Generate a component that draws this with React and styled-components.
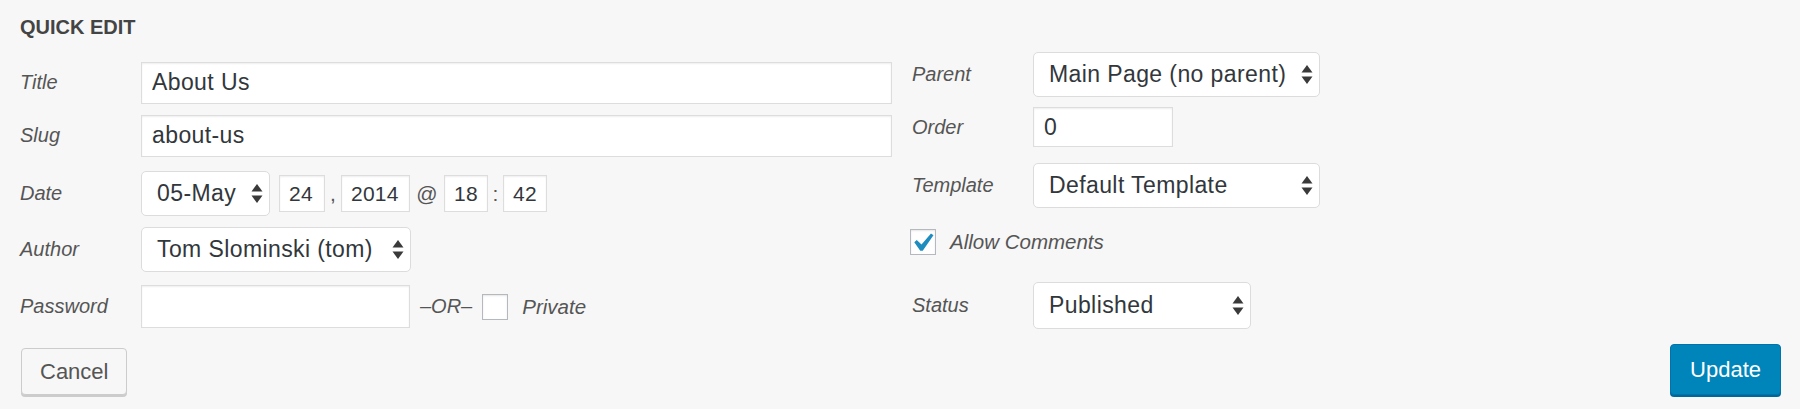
import React from 'react'
import styled, { createGlobalStyle } from 'styled-components'

const GlobalStyle = createGlobalStyle`
  html, body {
    margin: 0;
    padding: 0;
    background: #f7f7f7;
  }
  body {
    font-family: "Liberation Sans", Arial, sans-serif;
    color: #32373c;
  }
`

const Arrows = () => (
  <svg width="12" height="19" viewBox="0 0 12 19">
    <path d="M6 0 L11.5 7.5 L0.5 7.5 Z" fill="#3a3a3a" />
    <path d="M6 19 L11.5 11.5 L0.5 11.5 Z" fill="#3a3a3a" />
  </svg>
)

const Check = () => (
  <svg width="24" height="24" viewBox="4 3 13 13">
    <path d="M14.83 4.89l1.34.94-5.81 8.38H9.02L5.78 9.67l1.34-1.25 2.57 2.4z" fill="#1e8cbe" />
  </svg>
)

const QuickEdit = () => {
  return (
    <Panel>
      <GlobalStyle />
      <Heading>Quick Edit</Heading>
      <Columns>
        <LeftCol>
          <Row>
            <Label>Title</Label>
            <TextInput $w={751} $h={42} defaultValue="About Us" readOnly />
          </Row>
          <Row $mt={8}>
            <Label>Slug</Label>
            <TextInput $w={751} $h={42} defaultValue="about-us" readOnly />
          </Row>
          <Row $mt={13}>
            <Label>Date</Label>
            <Select $w={129}>
              <span>05-May</span>
              <Arrows />
            </Select>
            <Gap $w={9} />
            <SmallInput $w={46} defaultValue="24" readOnly />
            <Sep $w={16}>,</Sep>
            <SmallInput $w={69} defaultValue="2014" readOnly />
            <Sep $w={34}>@</Sep>
            <SmallInput $w={44} defaultValue="18" readOnly />
            <Sep $w={15}>:</Sep>
            <SmallInput $w={44} defaultValue="42" readOnly />
          </Row>
          <Row $mt={11}>
            <Label>Author</Label>
            <Select $w={270}>
              <span>Tom Slominski (tom)</span>
              <Arrows />
            </Select>
          </Row>
          <Row $mt={12}>
            <Label>Password</Label>
            <TextInput $w={269} $h={43} defaultValue="" readOnly />
            <Or>–OR–</Or>
            <CheckBox />
            <CheckText>Private</CheckText>
          </Row>
        </LeftCol>
        <RightCol>
          <Row $h={46}>
            <Label>Parent</Label>
            <Select $w={287}>
              <span>Main Page (no parent)</span>
              <Arrows />
            </Select>
          </Row>
          <Row $h={40} $mt={10}>
            <Label>Order</Label>
            <TextInput $w={140} $h={40} defaultValue="0" readOnly />
          </Row>
          <Row $h={46} $mt={15}>
            <Label>Template</Label>
            <Select $w={287}>
              <span>Default Template</span>
              <Arrows />
            </Select>
          </Row>
          <Row $h={26} $mt={21}>
            <CheckBox $left={-2}>
              <Check />
            </CheckBox>
            <CheckText>Allow Comments</CheckText>
          </Row>
          <Row $h={47} $mt={27}>
            <Label>Status</Label>
            <Select $w={218} $h={47}>
              <span>Published</span>
              <Arrows />
            </Select>
          </Row>
        </RightCol>
      </Columns>
      <Footer>
        <Button>Cancel</Button>
        <Button $primary>Update</Button>
      </Footer>
    </Panel>
  )
}

const Panel = styled.div`
  width: 1800px;
  height: 409px;
  box-sizing: border-box;
  padding: 15px 19px 0 20px;
  background: #f7f7f7;
  display: flex;
  flex-direction: column;
`

const Heading = styled.h2`
  margin: 0;
  font-size: 20px;
  line-height: 24px;
  font-weight: bold;
  color: #444;
  text-transform: uppercase;
`

const Columns = styled.div`
  display: flex;
  align-items: flex-start;
  margin-top: 12px;
`

const LeftCol = styled.div`
  width: 872px;
  padding-top: 9px;
  display: flex;
  flex-direction: column;
`

const RightCol = styled.div`
  margin-left: 20px;
  display: flex;
  flex-direction: column;
`

const Row = styled.div`
  display: flex;
  align-items: center;
  height: ${p => p.$h || 45}px;
  margin-top: ${p => p.$mt || 0}px;
`

const Label = styled.span`
  width: 121px;
  flex: none;
  font-style: italic;
  font-size: 20px;
  color: #555;
`

const TextInput = styled.input`
  box-sizing: border-box;
  width: ${p => p.$w}px;
  height: ${p => p.$h || 41}px;
  margin: 0;
  padding: 0 10px;
  border: 1px solid #ddd;
  border-radius: 0;
  background: #fff;
  box-shadow: inset 0 1px 2px rgba(0, 0, 0, 0.07);
  font-family: "Liberation Sans", Arial, sans-serif;
  font-size: 23px;
  letter-spacing: 0.4px;
  color: #32373c;
  outline: none;
`

const SmallInput = styled(TextInput)`
  height: 37px;
  padding: 0 9px;
  font-size: 21px;
  letter-spacing: 0.2px;
`

const Select = styled.div`
  box-sizing: border-box;
  width: ${p => p.$w}px;
  height: ${p => p.$h || 45}px;
  display: flex;
  align-items: center;
  justify-content: space-between;
  padding: 0 6px 0 15px;
  border: 1px solid #dcdcdc;
  border-radius: 5px;
  background: #fff;
  font-size: 23px;
  letter-spacing: 0.4px;
  color: #32373c;
  white-space: nowrap;
`

const Gap = styled.span`
  width: ${p => p.$w}px;
  flex: none;
`

const Sep = styled.span`
  width: ${p => p.$w}px;
  flex: none;
  text-align: center;
  font-size: 21px;
  color: #555;
`

const Or = styled.span`
  margin-left: 10px;
  font-style: italic;
  font-size: 20px;
  color: #555;
`

const CheckBox = styled.span`
  box-sizing: border-box;
  width: 26px;
  height: 26px;
  flex: none;
  margin-left: ${p => (p.$left !== undefined ? p.$left : 10)}px;
  display: flex;
  align-items: center;
  justify-content: center;
  border: 1px solid #b4b9be;
  background: #fff;
  box-shadow: inset 0 1px 2px rgba(0, 0, 0, 0.1);
`

const CheckText = styled.span`
  margin-left: 14px;
  font-style: italic;
  font-size: 20.5px;
  color: #555;
`

const Footer = styled.div`
  display: flex;
  justify-content: space-between;
  align-items: flex-end;
  margin-top: 15px;
  padding-left: 1px;
`

const Button = styled.button`
  box-sizing: border-box;
  height: ${p => (p.$primary ? 51 : 47)}px;
  padding: 0 ${p => (p.$primary ? 19 : 18)}px;
  margin: 0;
  border: 1px solid ${p => (p.$primary ? '#0073aa' : '#ccc')};
  border-radius: 4px;
  background: ${p => (p.$primary ? '#0085ba' : '#f7f7f7')};
  box-shadow: 0 2px 0 ${p => (p.$primary ? '#006799' : '#ccc')};
  color: ${p => (p.$primary ? '#fff' : '#555')};
  font-family: "Liberation Sans", Arial, sans-serif;
  font-size: 22px;
  cursor: pointer;
`

export default QuickEdit
